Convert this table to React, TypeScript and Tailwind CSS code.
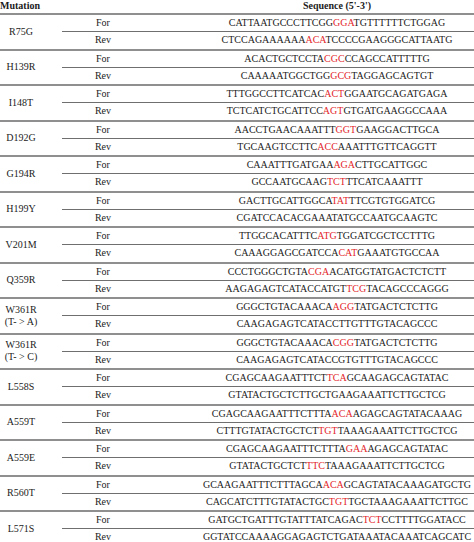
import React from 'react';

type Row = { seq: string };

// [mutation label lines, for primer, rev primer]; the codon in [] is the mutated one
const mutations: { label: string[]; forward: string; reverse: string }[] = [
  { label: ['R75G'], forward: 'CATTAATGCCCTTCGG[GGA]TGTTTTTTCTGGAG', reverse: 'CTCCAGAAAAAA[ACA]TCCCCGAAGGGCATTAATG' },
  { label: ['H139R'], forward: 'ACACTGCTCCTA[CGC]CCAGCCATTTTTG', reverse: 'CAAAAATGGCTGG[GCG]TAGGAGCAGTGT' },
  { label: ['I148T'], forward: 'TTTGGCCTTCATCAC[ACT]GGAATGCAGATGAGA', reverse: 'TCTCATCTGCATTCC[AGT]GTGATGAAGGCCAAA' },
  { label: ['D192G'], forward: 'AACCTGAACAAATTT[GGT]GAAGGACTTGCA', reverse: 'TGCAAGTCCTTC[ACC]AAATTTGTTCAGGTT' },
  { label: ['G194R'], forward: 'CAAATTTGATGAA[AGA]CTTGCATTGGC', reverse: 'GCCAATGCAAG[TCT]TTCATCAAATTT' },
  { label: ['H199Y'], forward: 'GACTTGCATTGGCA[TAT]TTCGTGTGGATCG', reverse: 'CGATCCACACGAAATATGCCAATGCAAGTC' },
  { label: ['V201M'], forward: 'TTGGCACATTTC[ATG]TGGATCGCTCCTTTG', reverse: 'CAAAGGAGCGATCCA[CAT]GAAATGTGCCAA' },
  { label: ['Q359R'], forward: 'CCCTGGGCTGTA[CGA]ACATGGTATGACTCTCTT', reverse: 'AAGAGAGTCATACCATGT[TCG]TACAGCCCAGGG' },
  { label: ['W361R', '(T- > A)'], forward: 'GGGCTGTACAAACA[AGG]TATGACTCTCTTG', reverse: 'CAAGAGAGTCATACCTTGTTTGTACAGCCC' },
  { label: ['W361R', '(T- > C)'], forward: 'GGGCTGTACAAACA[CGG]TATGACTCTCTTG', reverse: 'CAAGAGAGTCATACCGTGTTTGTACAGCCC' },
  { label: ['L558S'], forward: 'CGAGCAAGAATTTCT[TCA]GCAAGAGCAGTATAC', reverse: 'GTATACTGCTCTTGCTGAAGAAATTCTTGCTCG' },
  { label: ['A559T'], forward: 'CGAGCAAGAATTTCTTTA[ACA]AGAGCAGTATACAAAG', reverse: 'CTTTGTATACTGCTCT[TGT]TAAAGAAATTCTTGCTCG' },
  { label: ['A559E'], forward: 'CGAGCAAGAATTTCTTTA[GAA]AGAGCAGTATAC', reverse: 'GTATACTGCTCT[TTC]TAAAGAAATTCTTGCTCG' },
  { label: ['R560T'], forward: 'GCAAGAATTTCTTTAGCA[ACA]GCAGTATACAAAGATGCTG', reverse: 'CAGCATCTTTGTATACTGC[TGT]TGCTAAAGAAATTCTTGC' },
  { label: ['L571S'], forward: 'GATGCTGATTTGTATTTATCAGAC[TCT]CCTTTTGGATACC', reverse: 'GGTATCCAAAAGGAGAGTCTGATAAATACAAATCAGCATC' },
];

function Sequence({ seq }: Row) {
  const parts = seq.split(/(\[[A-Z]+\])/).filter(Boolean);
  return (
    <span className="whitespace-nowrap">
      {parts.map((p, i) =>
        p.startsWith('[') ? (
          <span key={i} className="text-[#e3262b]">{p.slice(1, -1)}</span>
        ) : (
          <span key={i}>{p}</span>
        )
      )}
    </span>
  );
}

function PrimerRow({ dir, seq }: { dir: string; seq: string }) {
  return (
    <div className="flex flex-1 items-center">
      <div className="w-[82px] text-center">{dir}</div>
      <div className="flex w-[386px] justify-center">
        <Sequence seq={seq} />
      </div>
    </div>
  );
}

export default function App() {
  return (
    <div className="h-[542px] w-[474px] overflow-hidden bg-white text-[10px] leading-[12px] text-[#1b1b1b]" style={{ fontFamily: '"Liberation Serif", "DejaVu Serif", serif' }}>
      <div className="w-[530px]">
        {/* header */}
        <div className="flex h-[13px] items-start font-bold leading-[11px]">
          <div className="w-[44px] whitespace-nowrap">Mutation</div>
          <div className="w-[100px]" />
          <div className="w-[386px] text-center">Sequence (5'-3')</div>
        </div>
        {mutations.map((m, idx) => (
          <div key={idx} className="flex h-[35.5px] border-t-2 border-[#8f8f8f]">
            <div className="flex w-[62px] flex-col items-center justify-center pr-[20px]">
              {m.label.map((l) => (
                <div key={l} className="whitespace-nowrap">{l}</div>
              ))}
            </div>
            <div className="flex flex-1 flex-col">
              <PrimerRow dir="For" seq={m.forward} />
              <div className="h-px bg-[#6f6f6f]" />
              <PrimerRow dir="Rev" seq={m.reverse} />
            </div>
          </div>
        ))}
      </div>
    </div>
  );
}
